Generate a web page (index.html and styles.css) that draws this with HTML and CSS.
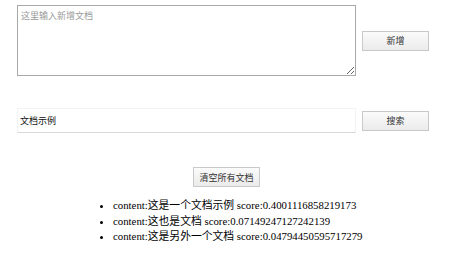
FILE: index.html
```html
<!DOCTYPE html>
<html>
<head>
<meta charset="utf-8">
<link rel="stylesheet" href="styles.css">
</head>
<body>
<div class="page">
  <div class="row add-row">
    <textarea class="doc-input" placeholder="这里输入新增文档"></textarea>
    <button class="btn">新增</button>
  </div>
  <div class="row search-row">
    <input class="search-input" type="text" value="文档示例">
    <button class="btn">搜索</button>
  </div>
  <div class="clear-row">
    <button class="btn">清空所有文档</button>
  </div>
  <ul class="results">
    <li>content:这是一个文档示例 score:0.4001116858219173</li>
    <li>content:这也是文档 score:0.07149247127242139</li>
    <li>content:这是另外一个文档 score:0.04794450595717279</li>
  </ul>
</div>
</body>
</html>
```
FILE: styles.css
```css
html, body {
  margin: 0;
  padding: 0;
  background: #fff;
}
.page {
  margin-left: 17px;
  padding-top: 5px;
  width: 419px;
}
.row {
  display: flex;
  align-items: center;
  gap: 6px;
}
.doc-input {
  box-sizing: border-box;
  width: 339px;
  height: 71px;
  margin: 0;
  padding: 3px 3px;
  border: 1px solid #a9a9a9;
  font-family: "Liberation Sans", "Noto Sans CJK SC", sans-serif;
  font-size: 9px;
  resize: both;
}
.doc-input::placeholder {
  color: #9a9a9a;
}
.btn {
  box-sizing: border-box;
  width: 67px;
  height: 20px;
  margin: 0;
  padding: 0;
  border: 1px solid #c9c9c9;
  background: linear-gradient(#fbfbfb, #ebebeb);
  color: #333;
  font-family: "Liberation Sans", "Noto Sans CJK SC", sans-serif;
  font-size: 9px;
}
.search-row {
  margin-top: 32px;
}
.search-input {
  box-sizing: border-box;
  width: 339px;
  height: 25px;
  margin: 0;
  padding: 0 2px;
  border: 1px solid #f3f3f3;
  border-bottom: 1px solid #d8d8d8;
  outline: none;
  color: #111;
  font-family: "Liberation Sans", "Noto Sans CJK SC", sans-serif;
  font-size: 9px;
}
.clear-row {
  display: flex;
  justify-content: center;
  margin-top: 34px;
}
.results {
  margin: 11px 0 0 56px;
  padding-left: 40px;
  font-family: "Liberation Serif", "Noto Sans CJK SC", serif;
  font-size: 10.8px;
  line-height: 15.5px;
  color: #000;
}
```
